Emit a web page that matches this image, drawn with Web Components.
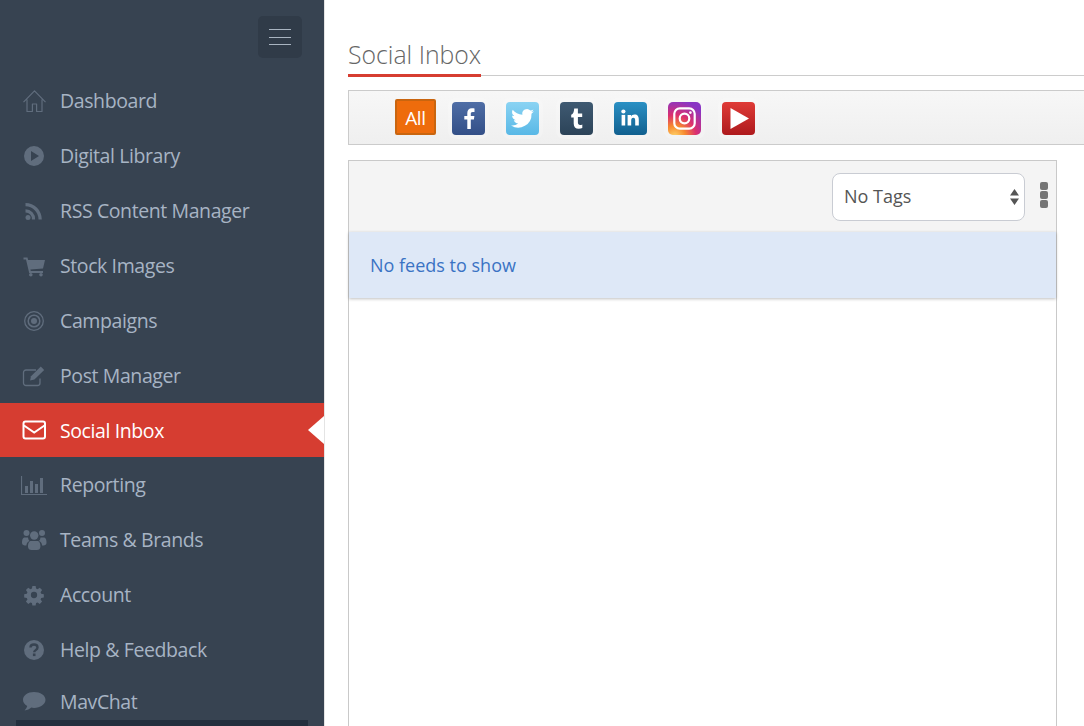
<!DOCTYPE html>
<html lang="en">
<head>
<meta charset="utf-8">
<title>Social Inbox</title>
<style>
    html, body { margin: 0; height: 100%; overflow: hidden; background: #fff; }
    body { display: flex; font-family: "Open Sans", "Liberation Sans", sans-serif; }
</style>
</head>
<body>
<side-nav>
    <nav-item icon="home">Dashboard</nav-item>
    <nav-item icon="play">Digital Library</nav-item>
    <nav-item icon="rss">RSS Content Manager</nav-item>
    <nav-item icon="cart">Stock Images</nav-item>
    <nav-item icon="target">Campaigns</nav-item>
    <nav-item icon="edit">Post Manager</nav-item>
    <nav-item icon="mail" active>Social Inbox</nav-item>
    <nav-item icon="chart">Reporting</nav-item>
    <nav-item icon="users">Teams &amp; Brands</nav-item>
    <nav-item icon="cog">Account</nav-item>
    <nav-item icon="help">Help &amp; Feedback</nav-item>
    <nav-item icon="chat" last>MavChat</nav-item>
</side-nav>
<inbox-page></inbox-page>

<script>
// sidebar icons, all on a 26x24 box
const NAV_ICONS = {
    home: `<path d="M2.500 13.200 13.500 1.800 24.500 13.200M6 10.500V22.500h5.400v-7.500h4.200v7.500H21V10.500" fill="none" stroke="currentColor" stroke-width="1.200" stroke-linejoin="round"/>`,
    play: `<path fill-rule="evenodd" d="M13 2a10 10 0 1 1 0 20 10 10 0 0 1 0-20zM10 7v10l8-5z" fill="currentColor"/>`,
    rss: `<g fill="currentColor"><circle cx="7" cy="18.400" r="2.500"/><path d="M4.500 10.200v3.300a6.400 6.400 0 0 1 6.400 6.900h3.200a9.700 9.700 0 0 0-9.600-10.200z"/><path d="M4.500 4v3.300a13 13 0 0 1 13 13.100h3.300A16.300 16.300 0 0 0 4.500 4z"/></g>`,
    cart: `<g fill="currentColor"><path d="M2.500 3.500h4l.6 2.500H24l-2 8.500-12.600 1 .4 1.500H22v2H8.200L5 5.500H2.500z"/><circle cx="9.800" cy="20.800" r="1.800"/><circle cx="20" cy="20.800" r="1.800"/></g>`,
    target: `<g fill="none" stroke="currentColor"><circle cx="13" cy="12" r="9.300" stroke-width="1.300"/><circle cx="13" cy="12" r="5.800" stroke-width="1.500"/></g><circle cx="13" cy="12" r="3" fill="currentColor"/>`,
    edit: `<path d="M19 14.500V19a2.500 2.500 0 0 1-2.500 2.500H5A2.500 2.500 0 0 1 2.500 19V8.500A2.500 2.500 0 0 1 5 6H15" fill="none" stroke="currentColor" stroke-width="1.300"/><path d="M10 12.200 19.800 2.600l3.400 3.300-9.800 9.700-4.300 1z" fill="currentColor"/>`,
    mail: `<rect x="2.500" y="3.500" width="21.500" height="17" rx="2" fill="none" stroke="currentColor" stroke-width="2"/><path d="M3 7.500 13.200 14.500 23.500 7.500" fill="none" stroke="currentColor" stroke-width="2"/>`,
    chart: `<path d="M.5 3v18.500H26" fill="none" stroke="currentColor" stroke-width="1.200"/><g fill="currentColor"><rect x="4" y="13" width="3" height="7"/><rect x="9" y="8" width="3" height="12"/><rect x="14" y="11" width="3" height="9"/><rect x="19" y="5" width="3" height="15"/></g>`,
    users: `<g fill="currentColor"><circle cx="5.500" cy="5" r="3"/><circle cx="21" cy="5" r="3"/><circle cx="13.200" cy="7.500" r="4.200"/><path d="M1 15c0-4 1-5.500 3-5.500h3a6 6 0 0 0 1.500 3.500C6.500 14 5.600 15.300 5.400 17.500 3 17.500 1 17 1 15zM25.500 15c0-4-1-5.500-3-5.500h-3a6 6 0 0 1-1.500 3.500c2 1 2.900 2.300 3.100 4.500 2.400 0 4.400-.5 4.400-2.500z"/><path d="M7 18.500c0-4 1.500-5.500 3-5.500h6.400c1.500 0 3 1.500 3 5.500 0 2.500-1.500 3.500-3.500 3.500H10.500C8.500 22 7 21 7 18.500z"/></g>`,
    cog: `<path fill-rule="evenodd" fill="currentColor" d="M11.200 2h3.600l.5 2.900 1.700.7 2.400-1.700 2.600 2.600-1.700 2.400.7 1.700 2.900.5v3.600l-2.900.5-.7 1.700 1.700 2.400-2.600 2.600-2.400-1.700-1.700.7-.5 2.900h-3.600l-.5-2.900-1.700-.7-2.400 1.700-2.600-2.600 1.700-2.400-.7-1.700-2.900-.5v-3.600l2.900-.5.7-1.700-1.700-2.400 2.600-2.600 2.400 1.700 1.700-.7zM13 8.500a3.500 3.500 0 1 0 0 7 3.500 3.500 0 0 0 0-7z" transform="translate(1.300 1.200) scale(.9)"/>`,
    help: `<circle cx="13" cy="12" r="10" fill="currentColor"/><path d="M9.500 9.500c0-2 1.600-3 3.500-3s3.500 1.100 3.500 3c0 2.700-3.300 2.500-3.300 4.700" fill="none" stroke="#374351" stroke-width="2.400"/><rect x="11.900" y="15.500" width="2.600" height="2.600" fill="#374351"/>`,
    chat: `<path fill="currentColor" d="M13 2C6.700 2 2 5.400 2 9.800c0 2.600 1.600 4.900 4.200 6.300-.3 1.500-1.300 3-2.600 4.400 2.700-.3 5-1.300 6.700-2.900 .9.200 1.800.3 2.700.3 6.300 0 11.500-3.600 11.500-8.100S19.300 2 13 2z"/>`
};

class NavItem extends HTMLElement {
    constructor() {
        super();
        this.attachShadow({ mode: 'open' });
    }

    connectedCallback() {
        const icon = NAV_ICONS[this.getAttribute('icon')] || '';
        this.shadowRoot.innerHTML = `
            <style>
                :host {
                    display: flex;
                    align-items: center;
                    position: relative;
                    flex: none;
                    height: 55px;
                    padding-left: 21px;
                    color: #a7b4c4;
                    font-size: 19.500px;
                    letter-spacing: -0.4px;
                }
                :host([active]) {
                    height: 54px;
                    background: #d63d31;
                    color: #fff;
                }
                :host([active]) svg { color: #fff; }
                :host([active])::after {
                    content: "";
                    position: absolute;
                    right: 0;
                    top: 13px;
                    border-style: solid;
                    border-width: 14px 16px 14px 0;
                    border-color: transparent #fff transparent transparent;
                }
                :host([last]) { height: 49px; }
                svg {
                    width: 26px;
                    height: 24px;
                    flex: none;
                    margin-right: 13px;
                    color: #606d7d;
                }
            </style>
            <svg viewBox="0 0 26 24" aria-hidden="true">${icon}</svg>
            <slot></slot>
        `;
    }
}

class SideNav extends HTMLElement {
    constructor() {
        super();
        this.attachShadow({ mode: 'open' });
    }

    connectedCallback() {
        this.shadowRoot.innerHTML = `
            <style>
                :host {
                    display: flex;
                    flex-direction: column;
                    position: relative;
                    flex: none;
                    box-sizing: border-box;
                    width: 325px;
                    height: 726px;
                    background: #374351;
                    border-right: 1px solid #e4e4e4;
                    overflow: hidden;
                }
                .burger {
                    display: flex;
                    flex-direction: column;
                    justify-content: center;
                    gap: 6.500px;
                    flex: none;
                    box-sizing: border-box;
                    align-self: flex-end;
                    width: 44px;
                    height: 42px;
                    margin: 16px 22px 15px 0;
                    padding: 0 11px;
                    background: #303b48;
                    border-radius: 5px;
                }
                .burger i { display: block; height: 1px; background: #a9b4c1; }
                .scrollbar {
                    position: absolute;
                    left: 16px;
                    right: 16px;
                    bottom: 0;
                    height: 6px;
                    background: #232f3e;
                }
            </style>
            <div class="burger"><i></i><i></i><i></i></div>
            <slot></slot>
            <div class="scrollbar"></div>
        `;
    }
}

class PageTitle extends HTMLElement {
    constructor() {
        super();
        this.attachShadow({ mode: 'open' });
    }

    connectedCallback() {
        this.shadowRoot.innerHTML = `
            <style>
                :host {
                    display: block;
                    border-bottom: 1px solid #ccc;
                    height: 36px;
                    margin-top: 39px;
                    color: #666;
                    font-size: 24.800px;
                    font-weight: 300;
                    line-height: 30px;
                }
                span {
                    display: inline-block;
                    height: 35px;
                    border-bottom: 3px solid #d63d31;
                    box-sizing: content-box;
                }
            </style>
            <span><slot></slot></span>
        `;
    }
}

const NETWORK_TILES = {
    facebook: `<defs><linearGradient id="g" x1="0" y1="0" x2="0" y2="1"><stop offset="0" stop-color="#4f6ea6"/><stop offset="1" stop-color="#334f87"/></linearGradient></defs><rect width="33" height="33" rx="4" fill="url(#g)"/><path fill="#fff" d="M18.800 27V17.600h3.100l.5-3.700h-3.600v-2.200c0-1.100.4-1.800 1.900-1.800h1.800V6.500c-.5-.1-1.500-.2-2.700-.2-2.700 0-4.500 1.600-4.500 4.700v2.900h-3v3.700h3V27z"/>`,
    twitter: `<defs><linearGradient id="g" x1="0" y1="0" x2="0" y2="1"><stop offset="0" stop-color="#8ad3f3"/><stop offset="1" stop-color="#59b8e6"/></linearGradient></defs><rect width="33" height="33" rx="4" fill="url(#g)"/><path fill="#fff" d="M28 9.300c-.9.400-1.800.6-2.700.7 1-.6 1.700-1.500 2.100-2.600-.9.500-1.900.9-3 1.100a4.700 4.700 0 0 0-8 4.300C12.500 12.600 9 10.700 6.700 7.800c-1.300 2.200-.6 5 1.500 6.300-.8 0-1.500-.2-2.100-.6 0 2.300 1.600 4.200 3.800 4.700-.7.200-1.400.2-2.100.1.600 1.900 2.300 3.200 4.400 3.200A9.400 9.400 0 0 1 5 23.500 13.300 13.300 0 0 0 25.500 11.700c.9-.6 1.800-1.400 2.500-2.400z"/>`,
    tumblr: `<defs><linearGradient id="g" x1="0" y1="0" x2="0" y2="1"><stop offset="0" stop-color="#3f5a72"/><stop offset="1" stop-color="#2c4358"/></linearGradient></defs><rect width="33" height="33" rx="4" fill="url(#g)"/><path fill="#fff" d="M14.200 6.500h3.700v5h4.300v3.600h-4.300v5.500c0 1.700.8 2.400 2.200 2.400.8 0 1.500-.2 2.200-.6v3.500c-1 .5-2.200.8-3.500.8-3.400 0-5.100-1.900-5.100-5.300v-5.800h-2.500v-2.800c2-.7 2.700-2.700 3-6.300z"/>`,
    linkedin: `<defs><linearGradient id="g" x1="0" y1="0" x2="0" y2="1"><stop offset="0" stop-color="#2a90c4"/><stop offset="1" stop-color="#11608f"/></linearGradient></defs><rect width="33" height="33" rx="4" fill="url(#g)"/><g fill="#fff"><circle cx="9.400" cy="9.500" r="2.100"/><rect x="7.600" y="12.900" width="3.600" height="10.600"/><path d="M13.600 12.900h3.400v1.500c.6-1 1.800-1.800 3.500-1.800 3.300 0 4.300 2 4.300 5.200v5.700h-3.600v-5c0-1.600-.4-2.800-1.900-2.800s-2.100 1.200-2.100 2.800v5h-3.600z"/></g>`,
    instagram: `<defs><radialGradient id="y" cx="0.2" cy="1.050" r="1.100"><stop offset="0" stop-color="#ffd66b"/><stop offset=".3" stop-color="#f78a2f"/><stop offset=".6" stop-color="#db2f6f"/><stop offset="1" stop-color="#8a35c4"/></radialGradient></defs><rect width="33" height="33" rx="5" fill="url(#y)"/><rect x="6.300" y="6.300" width="20.400" height="20.400" rx="5.500" fill="none" stroke="#fff" stroke-width="2.200"/><circle cx="16.500" cy="16.500" r="4.800" fill="none" stroke="#fff" stroke-width="2.200"/><circle cx="22.400" cy="10.600" r="1.300" fill="#fff"/>`,
    youtube: `<defs><linearGradient id="g" x1="0" y1="0" x2="0" y2="1"><stop offset="0" stop-color="#df3b37"/><stop offset="1" stop-color="#ae1a1d"/></linearGradient></defs><rect width="33" height="33" rx="4" fill="url(#g)"/><path fill="#fff" d="M8.500 6 27 16.500 8.500 27z"/>`
};

class NetworkTile extends HTMLElement {
    constructor() {
        super();
        this.attachShadow({ mode: 'open' });
    }

    connectedCallback() {
        const name = this.getAttribute('name');
        this.shadowRoot.innerHTML = `
            <style>
                :host {
                    display: block;
                    flex: none;
                    width: 33px;
                    height: 33px;
                    border-radius: 4px;
                    box-shadow: 0 0 0 4px rgba(255, 255, 255, .2);
                }
                svg { display: block; width: 33px; height: 33px; }
            </style>
            <svg viewBox="0 0 33 33" role="img" aria-label="${name}">${NETWORK_TILES[name]}</svg>
        `;
    }
}

class NetworkBar extends HTMLElement {
    constructor() {
        super();
        this.attachShadow({ mode: 'open' });
    }

    connectedCallback() {
        this.shadowRoot.innerHTML = `
            <style>
                :host {
                    display: flex;
                    align-items: center;
                    box-sizing: border-box;
                    height: 55px;
                    margin: 14px -4px 0 0;
                    padding: 2px 0 0 46px;
                    background: linear-gradient(#f7f7f7, #efefef);
                    border: 1px solid #cbcbcb;
                    gap: 21px;
                }
                .all {
                    box-sizing: border-box;
                    width: 41px;
                    height: 36px;
                    margin: -3px -5px 0 0;
                    background: #ee6c0c;
                    border: 2px solid #c9650f;
                    border-radius: 2px;
                    color: #fff;
                    font-size: 19px;
                    line-height: 35px;
                    letter-spacing: -0.3px;
                    text-align: center;
                }
            </style>
            <div class="all">All</div>
            <network-tile name="facebook"></network-tile>
            <network-tile name="twitter"></network-tile>
            <network-tile name="tumblr"></network-tile>
            <network-tile name="linkedin"></network-tile>
            <network-tile name="instagram"></network-tile>
            <network-tile name="youtube"></network-tile>
        `;
    }
}

class TagSelect extends HTMLElement {
    constructor() {
        super();
        this.attachShadow({ mode: 'open' });
    }

    connectedCallback() {
        this.shadowRoot.innerHTML = `
            <style>
                :host { display: block; position: relative; width: 193px; height: 48px; }
                select {
                    appearance: none;
                    -webkit-appearance: none;
                    box-sizing: border-box;
                    width: 100%;
                    height: 100%;
                    padding: 0 11px 2px;
                    background: #fff;
                    border: 1px solid #c9ccd3;
                    border-radius: 8px;
                    color: #555;
                    font: 18px "Open Sans", "Liberation Sans", sans-serif;
                    outline: none;
                }
                .arrows {
                    position: absolute;
                    right: 6px;
                    top: 16px;
                    width: 9px;
                    height: 16px;
                    pointer-events: none;
                }
            </style>
            <select aria-label="Tags"><option>No Tags</option></select>
            <svg class="arrows" viewBox="0 0 9 16"><path fill="#555" d="M4.500 0 9 6.500H0zM0 9.500h9L4.500 16z"/></svg>
        `;
    }
}

class FeedPanel extends HTMLElement {
    constructor() {
        super();
        this.attachShadow({ mode: 'open' });
    }

    connectedCallback() {
        this.shadowRoot.innerHTML = `
            <style>
                :host {
                    display: block;
                    flex: 1;
                    box-sizing: border-box;
                    width: 709px;
                    margin-top: 15px;
                    border: 1px solid #c9c9c9;
                    border-bottom: 0;
                }
                .head {
                    display: flex;
                    align-items: center;
                    justify-content: flex-end;
                    box-sizing: border-box;
                    height: 71px;
                    padding: 1px 8px 0 0;
                    gap: 15px;
                    background: #f4f4f4;
                }
                .more { display: flex; flex-direction: column; gap: 1px; margin-top: -4px; }
                .more i { display: block; width: 8px; height: 8px; border-radius: 2px; background: #757575; }
                .notice {
                    height: 66px;
                    padding-left: 21px;
                    background: #dee8f7;
                    box-shadow: 0 1px 3px rgba(0, 0, 0, .25);
                    color: #3a73c4;
                    font-size: 18px;
                    line-height: 66px;
                }
            </style>
            <div class="head">
                <tag-select></tag-select>
                <div class="more"><i></i><i></i><i></i></div>
            </div>
            <div class="notice">No feeds to show</div>
        `;
    }
}

class InboxPage extends HTMLElement {
    constructor() {
        super();
        this.attachShadow({ mode: 'open' });
    }

    connectedCallback() {
        this.shadowRoot.innerHTML = `
            <style>
                :host {
                    display: flex;
                    flex-direction: column;
                    flex: 1;
                    min-width: 0;
                    box-sizing: border-box;
                    height: 726px;
                    padding-left: 23px;
                    overflow: hidden;
                }
            </style>
            <page-title>Social Inbox</page-title>
            <network-bar></network-bar>
            <feed-panel></feed-panel>
        `;
    }
}

customElements.define('nav-item', NavItem);
customElements.define('side-nav', SideNav);
customElements.define('page-title', PageTitle);
customElements.define('network-tile', NetworkTile);
customElements.define('network-bar', NetworkBar);
customElements.define('tag-select', TagSelect);
customElements.define('feed-panel', FeedPanel);
customElements.define('inbox-page', InboxPage);
</script>
</body>
</html>
